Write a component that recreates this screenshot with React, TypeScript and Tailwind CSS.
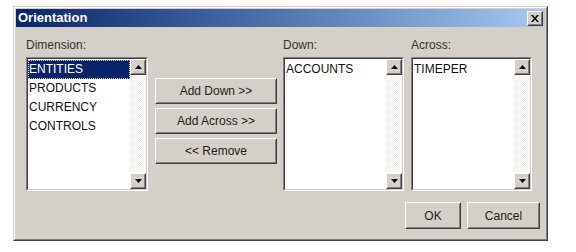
import { ReactNode } from "react";

const font = { fontFamily: '"Liberation Sans", Arial, sans-serif' };

function Raised({ children, className = "" }: { children?: ReactNode; className?: string }) {
	return (
		<div className={`border border-t-white border-l-white border-r-[#404040] border-b-[#404040] bg-[#d4d0c8] ${className}`}>
			<div className="flex h-full w-full items-center justify-center border border-t-[#d4d0c8] border-l-[#d4d0c8] border-r-[#808080] border-b-[#808080]">
				{children}
			</div>
		</div>
	);
}

function Arrow({ up }: { up?: boolean }) {
	return (
		<Raised className="h-[16px] w-[16px] shrink-0">
			<svg width="7" height="4" viewBox="0 0 7 4">
				{up ? <path d="M3.5 0 L7 4 L0 4 Z" fill="#000" /> : <path d="M0 0 L7 0 L3.5 4 Z" fill="#000" />}
			</svg>
		</Raised>
	);
}

function ListBox({ items, selected }: { items: string[]; selected?: number }) {
	return (
		<div className="h-[134px] border border-t-[#808080] border-l-[#808080] border-r-white border-b-white">
			<div className="flex h-full border border-t-[#404040] border-l-[#404040] border-r-[#d4d0c8] border-b-[#d4d0c8] bg-white">
				<div className="flex-1 pt-[1px]">
					{items.map((it, i) => (
						<div
							key={it}
							className={`h-[19px] pl-[1px] text-[12px] leading-[19px] ${
								i === selected ? "bg-[#0a246a] text-white outline outline-1 outline-dotted outline-[#d4d0c8] -outline-offset-1" : "text-[#111]"
							}`}
						>
							{it}
						</div>
					))}
				</div>
				<div className="flex w-[16px] flex-col bg-[repeating-conic-gradient(#f1efe9_0_25%,#ffffff_0_50%)] bg-[length:2px_2px]">
					<Arrow up />
					<div className="flex-1" />
					<Arrow />
				</div>
			</div>
		</div>
	);
}

function Button({ label, className = "" }: { label: string; className?: string }) {
	return (
		<Raised className={className}>
			<span className="text-[12px] text-[#222]">{label}</span>
		</Raised>
	);
}

export default function App() {
	return (
		<div className="h-[252px] w-[576px] bg-white pl-[13px] pt-[6px]" style={font}>
			<div className="h-[235px] w-[535px] border border-t-[#d4d0c8] border-l-[#d4d0c8] border-r-[#404040] border-b-[#404040] bg-[#d4d0c8]">
				<div className="h-full w-full border border-t-white border-l-white border-r-[#808080] border-b-[#808080] p-[1px]">
					<div className="flex h-[18px] items-center justify-between bg-gradient-to-r from-[#0a246a] to-[#a6caf0] pl-[2px] pr-[2px]">
						<span className="text-[13px] font-bold text-white">Orientation</span>
						<Raised className="h-[15px] w-[16px]">
							<svg width="8" height="7" viewBox="0 0 8 7">
								<path d="M0 0 L2 0 L4 2.5 L6 0 L8 0 L5 3.5 L8 7 L6 7 L4 4.5 L2 7 L0 7 L3 3.5 Z" fill="#000" />
							</svg>
						</Raised>
					</div>
					<div className="flex pl-[10px] pt-[9px]">
						<div className="w-[122px]">
							<div className="h-[21px] text-[12px] text-[#333]">Dimension:</div>
							<ListBox items={["ENTITIES", "PRODUCTS", "CURRENCY", "CONTROLS"]} selected={0} />
						</div>
						<div className="ml-[7px] flex w-[122px] flex-col gap-[4px] pt-[42px]">
							<Button label="Add Down >>" className="h-[26px]" />
							<Button label="Add Across >>" className="h-[26px]" />
							<Button label="<< Remove" className="h-[26px]" />
						</div>
						<div className="ml-[6px] w-[121px]">
							<div className="h-[21px] text-[12px] text-[#333]">Down:</div>
							<ListBox items={["ACCOUNTS"]} />
						</div>
						<div className="ml-[7px] w-[121px]">
							<div className="h-[21px] text-[12px] text-[#333]">Across:</div>
							<ListBox items={["TIMEPER"]} />
						</div>
					</div>
					<div className="flex justify-end gap-[6px] pr-[5px] pt-[11px]">
						<Button label="OK" className="h-[27px] w-[56px]" />
						<Button label="Cancel" className="h-[27px] w-[73px]" />
					</div>
				</div>
			</div>
		</div>
	);
}
